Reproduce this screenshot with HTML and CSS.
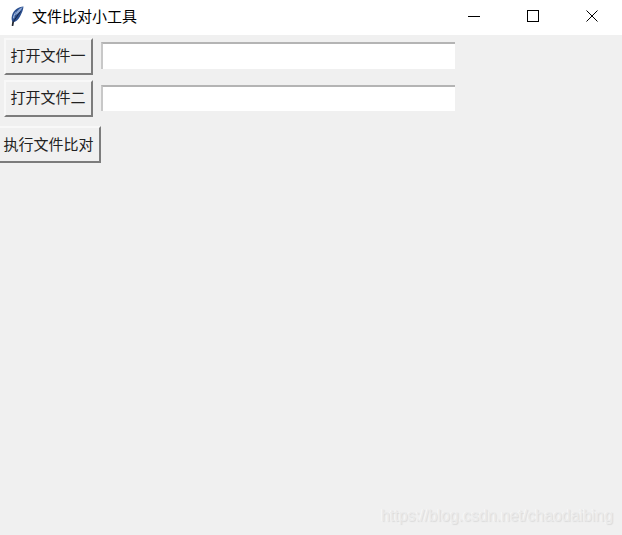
FILE: index.html
```html
<!DOCTYPE html>
<html lang="zh">
<head>
<meta charset="utf-8">
<title>文件比对小工具</title>
<link rel="stylesheet" href="styles.css">
</head>
<body>
<div class="window">
  <header class="titlebar">
    <svg class="app-icon" width="14" height="20" viewBox="0 0 14 20" aria-hidden="true">
      <path d="M13.500 .5C8.500 .5 3.500 4 2 9.500 1.300 12 1.500 14.800 2.800 16.500c3-.5 5.700-3 7.500-6.500C12 6.800 13.300 3.500 13.500 .5z" fill="#2b4f8f"/>
      <path d="M12.800 1C9.500 2 6 5.500 4.800 9.500c3-1.500 6-4.500 8-8.500z" fill="#8fa9d4"/>
      <path d="M3 12.500C3.200 9.500 4.500 6.500 6.500 5 5 7.800 4.300 10 4.300 12z" fill="#a9c0e4"/>
      <path d="M3.200 15.500 2.500 20" stroke="#23262e" stroke-width="1.700" fill="none"/>
      <path d="M3.500 15.500C5.500 12.500 7.500 9.500 10.500 5.500" stroke="#17233f" stroke-width="1" fill="none"/>
    </svg>
    <span class="title">文件比对小工具</span>
    <div class="controls">
      <span class="ctl">
        <svg width="12" height="12" viewBox="0 0 12 12"><path d="M0 6.500H12" stroke="#000" fill="none"/></svg>
      </span>
      <span class="ctl">
        <svg width="12" height="12" viewBox="0 0 12 12"><rect x=".5" y=".5" width="11" height="11" stroke="#000" fill="none"/></svg>
      </span>
      <span class="ctl">
        <svg width="12" height="12" viewBox="0 0 12 12"><path d="M.5.500 11.500 11.500M11.500.500.5 11.500" stroke="#000" fill="none"/></svg>
      </span>
    </div>
  </header>
  <main class="content">
    <div class="row">
      <button class="btn">打开文件一</button>
      <input class="entry" type="text">
    </div>
    <div class="row">
      <button class="btn">打开文件二</button>
      <input class="entry entry-second" type="text">
    </div>
    <div class="row-run">
      <button class="btn btn-run">执行文件比对</button>
    </div>
    <div class="watermark">https://blog.csdn.net/chaodaibing</div>
  </main>
</div>
</body>
</html>
```

FILE: styles.css
```css
* { box-sizing: border-box; }
html, body { margin: 0; padding: 0; height: 100%; overflow: hidden; }
body { font-family: "Noto Sans CJK SC", "Liberation Sans", sans-serif; background: #f0f0f0; }
.window { width: 622px; height: 535px; display: flex; flex-direction: column; }
.titlebar {
  height: 35px; flex: none; background: #fff; display: flex; align-items: center;
  padding-left: 10px;
}
.app-icon { flex: none; margin-right: 8px; margin-top: -3px; }
.title { font-size: 15px; line-height: 20px; color: #000; margin-top: -3px; white-space: nowrap; width: 105px; }
.controls { margin-left: auto; display: flex; margin-top: -3px; padding-right: 1px; }
.ctl { width: 59px; height: 32px; display: flex; align-items: center; justify-content: center; }
.ctl svg { display: block; }
.content { flex: 1; background: #f0f0f0; position: relative; padding: 3px 0 0 4px; }
.row { display: flex; align-items: flex-start; gap: 8px; height: 37px; margin-bottom: 5px; }
.btn {
  width: 89px; height: 37px; padding: 0 1px 4px 0; margin: 0; font-family: inherit;
  font-size: 15px; line-height: 20px; color: #222; background: #f0f0f0; white-space: nowrap;
  border: 2px solid; border-color: #f8f8f8 #7c7c7c #7c7c7c #f8f8f8;
  border-radius: 0; display: block;
}
.entry {
  width: 354px; height: 27px; padding: 0; margin: 4px 0 0; background: #fff; outline: 0;
  border: 0; border-top: 2px solid #b4b4b4; border-left: 2px solid #c8c8c8;
}
.entry-second { margin-top: 5px; height: 26px; }
.row-run { padding-top: 4px; margin-left: -6px; }
.btn-run { width: 103px; padding: 0 2px 2px 0; }
.watermark {
  position: absolute; right: 9px; bottom: 10px;
  font-family: "Liberation Sans", sans-serif; font-size: 16px; line-height: 18px; letter-spacing: -.06px;
  color: #ebebeb; text-shadow: 1px 1px 1px #dadada, -1px 0 0 #f9f9f9; white-space: nowrap;
}
```
